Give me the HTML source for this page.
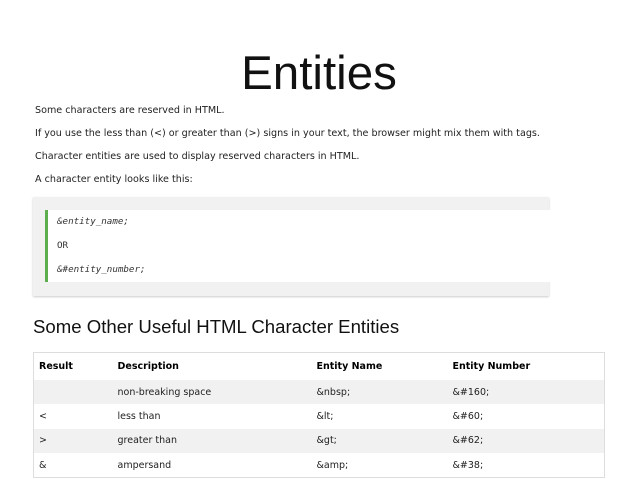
<!DOCTYPE html>
<html><head><style>
body{margin:0;width:638px;height:479px;background:#fff;overflow:hidden;font-family:"DejaVu Sans","Liberation Sans",sans-serif;color:#000;position:relative}
.t{position:absolute;left:0;width:638px;text-align:center;top:46px;font-family:"Liberation Sans",sans-serif;font-size:47.5px;font-weight:300;color:#111}
.p{position:absolute;left:35px;font-size:9.6px;color:#222;white-space:nowrap}
.box{position:absolute;left:33px;top:197px;width:516px;height:99px;background:#f1f1f1;box-shadow:0 1px 2px #ccc}
.in{position:absolute;left:12px;top:13px;width:504px;height:72px;background:#fff;border-left:3px solid #5fae4e}
.c{position:absolute;left:9px;font-family:"DejaVu Sans Mono","Liberation Mono",monospace;font-size:9.2px;color:#333}
.h{position:absolute;left:33px;top:316px;font-family:"Liberation Sans",sans-serif;font-size:18.6px;color:#111}
table{position:absolute;left:33px;top:352px;width:572px;border-collapse:collapse;font-size:9.5px;border:1px solid #ddd}
td{height:24.4px;padding:0 0 0 5px;box-sizing:border-box;color:#222}
tr:nth-child(even){background:#f1f1f1}
th{height:25px;text-align:left;padding-left:5px;font-size:9.5px;font-weight:bold}
</style></head><body>
<div class="t">Entities</div>
<div class="p" style="top:105px">Some characters are reserved in HTML.</div>
<div class="p" style="top:128px">If you use the less than (&lt;) or greater than (&gt;) signs in your text, the browser might mix them with tags.</div>
<div class="p" style="top:151px">Character entities are used to display reserved characters in HTML.</div>
<div class="p" style="top:174px">A character entity looks like this:</div>
<div class="box"><div class="in">
<div class="c" style="top:6px;font-style:italic">&amp;entity_name;</div>
<div class="c" style="top:30px">OR</div>
<div class="c" style="top:54px;font-style:italic">&amp;#entity_number;</div>
</div></div>
<div class="h">Some Other Useful HTML Character Entities</div>
<table>
<colgroup><col style="width:79px"><col style="width:199px"><col style="width:136px"><col></colgroup>
<tr><th>Result</th><th>Description</th><th>Entity Name</th><th>Entity Number</th></tr>
<tr><td></td><td>non-breaking space</td><td>&amp;nbsp;</td><td>&amp;#160;</td></tr>
<tr><td>&lt;</td><td>less than</td><td>&amp;lt;</td><td>&amp;#60;</td></tr>
<tr><td>&gt;</td><td>greater than</td><td>&amp;gt;</td><td>&amp;#62;</td></tr>
<tr><td>&amp;</td><td>ampersand</td><td>&amp;amp;</td><td>&amp;#38;</td></tr>
</table>
</body></html>
